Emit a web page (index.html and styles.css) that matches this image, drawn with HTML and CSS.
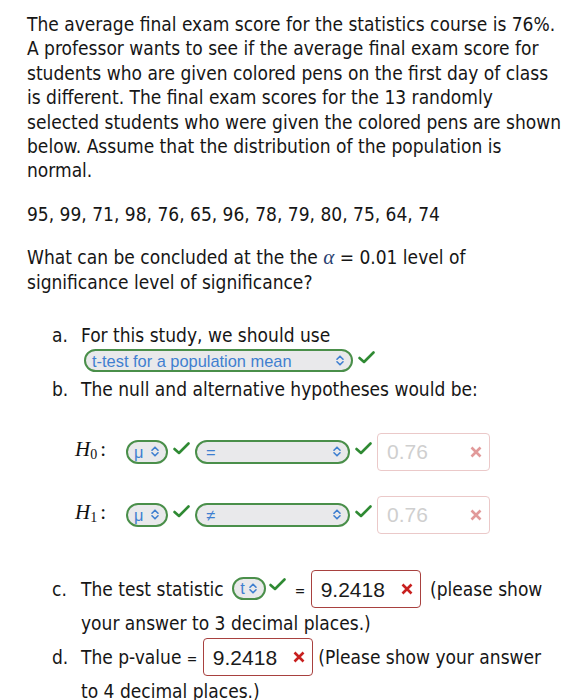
FILE: index.html
```html
<!DOCTYPE html>
<html>
<head>
<meta charset="utf-8">
<link rel="stylesheet" href="styles.css">
</head>
<body>
<div class="page">
  <p class="para">The average final exam score for the statistics course is 76%.<br>A professor wants to see if the average final exam score for<br>students who are given colored pens on the first day of class<br>is different. The final exam scores for the 13 randomly<br>selected students who were given the colored pens are shown<br>below. Assume that the distribution of the population is<br>normal.</p>
  <p class="data">95, 99, 71, 98, 76, 65, 96, 78, 79, 80, 75, 64, 74</p>
  <p class="question">What can be concluded at the the <span class="alpha">α</span> = 0.01 level of<br>significance level of significance?</p>

  <div class="items">
    <div class="item item-a">
      <span class="lbl">a.</span>
      <div class="body">
        <div>For this study, we should use</div>
        <div class="selrow">
          <span class="pill pill-wide">t-test for a population mean<svg class="arr" viewBox="0 0 8 11"><path d="M1 4.2 L4 1.2 L7 4.2 M1 6.8 L4 9.8 L7 6.8"/></svg></span>
          <svg class="chk" viewBox="0 0 17 13"><path d="M1.5 7 L6 11 L15.5 1.5"/></svg>
        </div>
      </div>
    </div>
    <div class="item item-b">
      <span class="lbl">b.</span>
      <div class="body">The null and alternative hypotheses would be:</div>
    </div>
  </div>

  <div class="hyps">
    <div class="hyp">
      <span class="hlab"><i>H</i><sub>0</sub>:</span>
      <span class="pill pill-mu">μ<svg class="arr" viewBox="0 0 8 11"><path d="M1 4.2 L4 1.2 L7 4.2 M1 6.8 L4 9.8 L7 6.8"/></svg></span>
      <svg class="chk" viewBox="0 0 17 13"><path d="M1.5 7 L6 11 L15.5 1.5"/></svg>
      <span class="pill pill-op">=<svg class="arr" viewBox="0 0 8 11"><path d="M1 4.2 L4 1.2 L7 4.2 M1 6.8 L4 9.8 L7 6.8"/></svg></span>
      <svg class="chk" viewBox="0 0 17 13"><path d="M1.5 7 L6 11 L15.5 1.5"/></svg>
      <span class="box box-pale">0.76<svg class="x" viewBox="0 0 12 12"><path d="M1.5 1.5 L10.5 10.5 M10.5 1.5 L1.5 10.5"/></svg></span>
    </div>
    <div class="hyp">
      <span class="hlab"><i>H</i><sub>1</sub>:</span>
      <span class="pill pill-mu">μ<svg class="arr" viewBox="0 0 8 11"><path d="M1 4.2 L4 1.2 L7 4.2 M1 6.8 L4 9.8 L7 6.8"/></svg></span>
      <svg class="chk" viewBox="0 0 17 13"><path d="M1.5 7 L6 11 L15.5 1.5"/></svg>
      <span class="pill pill-op">≠<svg class="arr" viewBox="0 0 8 11"><path d="M1 4.2 L4 1.2 L7 4.2 M1 6.8 L4 9.8 L7 6.8"/></svg></span>
      <svg class="chk" viewBox="0 0 17 13"><path d="M1.5 7 L6 11 L15.5 1.5"/></svg>
      <span class="box box-pale">0.76<svg class="x" viewBox="0 0 12 12"><path d="M1.5 1.5 L10.5 10.5 M10.5 1.5 L1.5 10.5"/></svg></span>
    </div>
  </div>

  <div class="items items-cd">
    <div class="item">
      <span class="lbl">c.</span>
      <div class="body">The test statistic <span class="pill pill-t">t<svg class="arr" viewBox="0 0 8 11"><path d="M1 4.2 L4 1.2 L7 4.2 M1 6.8 L4 9.8 L7 6.8"/></svg></span><svg class="chk chk-inline" viewBox="0 0 17 13"><path d="M1.5 7 L6 11 L15.5 1.5"/></svg> <span class="eq">=</span> <span class="box box-bad box-c">9.2418<svg class="x" viewBox="0 0 12 12"><path d="M1.5 1.5 L10.5 10.5 M10.5 1.5 L1.5 10.5"/></svg></span> (please show<br>your answer to 3 decimal places.)</div>
    </div>
    <div class="item">
      <span class="lbl">d.</span>
      <div class="body">The p-value <span class="eq">=</span> <span class="box box-bad">9.2418<svg class="x" viewBox="0 0 12 12"><path d="M1.5 1.5 L10.5 10.5 M10.5 1.5 L1.5 10.5"/></svg></span> (Please show your answer<br>to 4 decimal places.)</div>
    </div>
  </div>
</div>
</body>
</html>
```

FILE: styles.css
```css
html, body {
  margin: 0;
  padding: 0;
  background: #ffffff;
}
.page {
  padding: 12px 0 0 27px;
  font-family: "DejaVu Sans Condensed", "DejaVu Sans", sans-serif;
  font-size: 19px;
  color: #161616;
  line-height: 24.4px;
}
p {
  margin: 0;
  white-space: nowrap;
}
.data {
  margin-top: 19px;
}
.question {
  margin-top: 19px;
}
.alpha {
  font-family: "Liberation Serif", serif;
  font-style: italic;
  font-size: 21px;
  line-height: 0;
  color: #2a3f70;
}
.items {
  margin-top: 29px;
  padding-left: 25px;
}
.item {
  display: flex;
}
.lbl {
  width: 29px;
  flex: none;
}
.selrow {
  display: flex;
  align-items: center;
  margin: 2px 0 5px 3px;
}
.pill {
  display: inline-flex;
  align-items: center;
  justify-content: space-between;
  box-sizing: border-box;
  height: 24px;
  border: 2px solid #4a8f4a;
  border-radius: 12px;
  background: #e9e9eb;
  color: #3f7fd0;
  font-family: "Liberation Sans", Arial, sans-serif;
  font-size: 16.4px;
  line-height: 1;
  padding: 0 7px 0 6px;
}
.pill-wide {
  width: 269px;
  height: 23px;
}
.pill-mu {
  width: 42px;
}
.pill-op {
  width: 155px;
  padding-left: 9px;
}
.pill-t {
  width: 34px;
  height: 23px;
  vertical-align: middle;
  margin: -10px 0 -6px 3px;
}
.arr {
  width: 8px;
  height: 11px;
  fill: none;
  stroke: #3f7fd0;
  stroke-width: 1.6;
  stroke-linecap: round;
  stroke-linejoin: round;
}
.chk {
  width: 17px;
  height: 13px;
  margin: -6px 5px 0 5px;
  fill: none;
  stroke: #2f8a33;
  stroke-width: 2.6;
  stroke-linecap: round;
  stroke-linejoin: round;
  flex: none;
}
.chk-inline {
  vertical-align: middle;
  margin: -12px 3px 0 3px;
}
.hyps {
  margin-top: 31px;
  padding-left: 48px;
  display: flex;
  flex-direction: column;
  gap: 25px;
}
.hyp {
  display: flex;
  align-items: center;
  height: 38px;
}
.hlab {
  width: 51px;
  font-family: "Liberation Serif", serif;
  font-size: 21px;
  color: #111;
}
.hlab i {
  font-style: italic;
}
.hlab sub {
  font-size: 14px;
  vertical-align: -3px;
  margin-right: 3px;
}
.box {
  display: inline-flex;
  align-items: center;
  justify-content: space-between;
  box-sizing: border-box;
  height: 38px;
  border-radius: 4px;
  font-family: "Liberation Sans", Arial, sans-serif;
  font-size: 21px;
  padding: 0 7px 0 9px;
  line-height: 1;
}
.box-pale {
  width: 113px;
  border: 1.5px solid #ebc9c9;
  color: #cfcfcf;
}
.box-pale .x {
  stroke: #e19a9a;
}
.box-bad {
  width: 110px;
  border: 1.5px solid #a8413f;
  color: #1a1a1a;
  vertical-align: middle;
  margin: -12px 0 -10px 0;
}
.box-c {
  margin-left: 0;
  margin-right: 4px;
}
.box-bad .x {
  stroke: #c8201f;
}
.x {
  width: 12px;
  height: 12px;
  fill: none;
  stroke-width: 2.6;
}
.items-cd {
  margin-top: 38px;
}
.items-cd .item {
  line-height: 34px;
}
.eq {
  font-size: 14px;
  line-height: 0;
}
```
